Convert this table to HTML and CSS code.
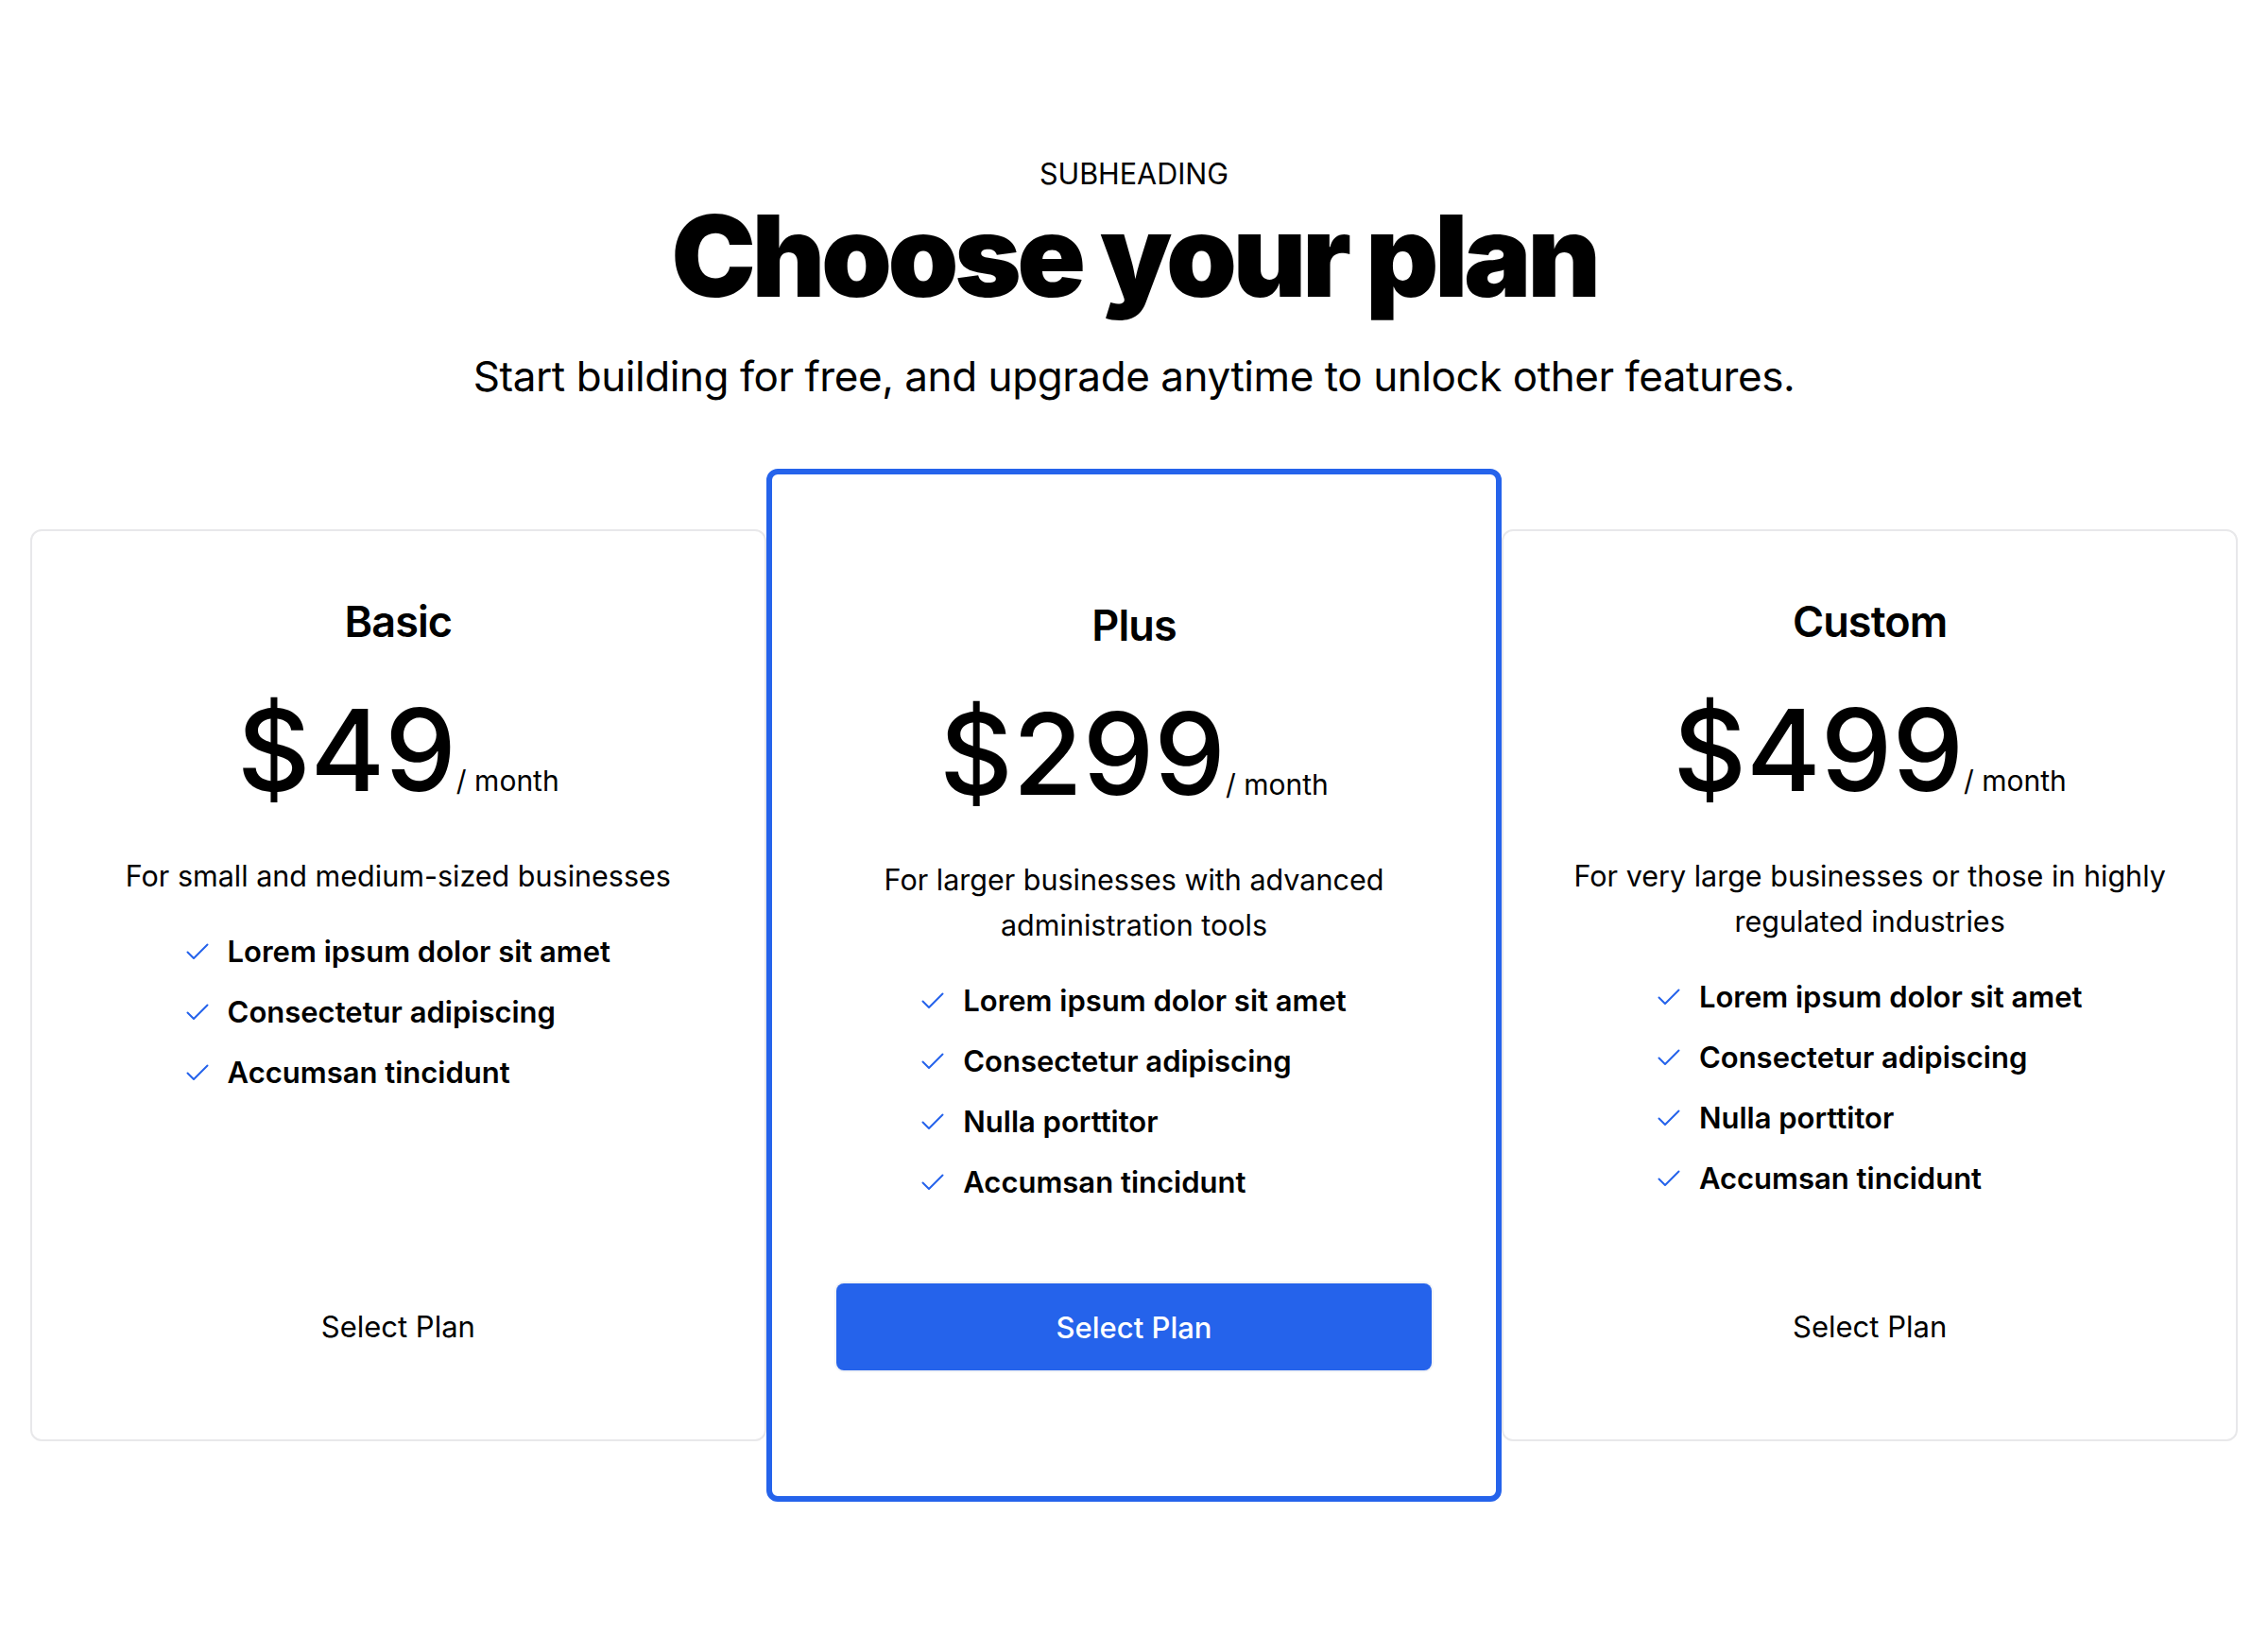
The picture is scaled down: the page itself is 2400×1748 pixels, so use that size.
FILE: index.html
```html
<!DOCTYPE html>
<html lang="en">
<head>
<meta charset="utf-8">
<title>Choose your plan</title>
<link rel="stylesheet" href="styles.css">
</head>
<body>
<section class="pricing">
  <header class="intro">
    <p class="eyebrow">SUBHEADING</p>
    <h1 class="title">Choose your plan</h1>
    <p class="lead">Start building for free, and upgrade anytime to unlock other features.</p>
  </header>
  <div class="plans">
    <article class="card">
      <h2 class="plan-name">Basic</h2>
      <div class="price"><span class="amount">$49</span><span class="per">/ month</span></div>
      <p class="desc">For small and medium-sized businesses</p>
      <ul class="features">
        <li><svg class="check" viewBox="0 0 24 18" fill="none" stroke="currentColor" stroke-width="2"><path stroke-linecap="round" stroke-linejoin="round" d="M1.5 9.5L8 16L22.5 1.5"/></svg>Lorem ipsum dolor sit amet</li>
        <li><svg class="check" viewBox="0 0 24 18" fill="none" stroke="currentColor" stroke-width="2"><path stroke-linecap="round" stroke-linejoin="round" d="M1.5 9.5L8 16L22.5 1.5"/></svg>Consectetur adipiscing</li>
        <li><svg class="check" viewBox="0 0 24 18" fill="none" stroke="currentColor" stroke-width="2"><path stroke-linecap="round" stroke-linejoin="round" d="M1.5 9.5L8 16L22.5 1.5"/></svg>Accumsan tincidunt</li>
      </ul>
      <button class="btn">Select Plan</button>
    </article>
    <article class="card featured">
      <h2 class="plan-name">Plus</h2>
      <div class="price"><span class="amount">$299</span><span class="per">/ month</span></div>
      <p class="desc">For larger businesses with advanced administration tools</p>
      <ul class="features">
        <li><svg class="check" viewBox="0 0 24 18" fill="none" stroke="currentColor" stroke-width="2"><path stroke-linecap="round" stroke-linejoin="round" d="M1.5 9.5L8 16L22.5 1.5"/></svg>Lorem ipsum dolor sit amet</li>
        <li><svg class="check" viewBox="0 0 24 18" fill="none" stroke="currentColor" stroke-width="2"><path stroke-linecap="round" stroke-linejoin="round" d="M1.5 9.5L8 16L22.5 1.5"/></svg>Consectetur adipiscing</li>
        <li><svg class="check" viewBox="0 0 24 18" fill="none" stroke="currentColor" stroke-width="2"><path stroke-linecap="round" stroke-linejoin="round" d="M1.5 9.5L8 16L22.5 1.5"/></svg>Nulla porttitor</li>
        <li><svg class="check" viewBox="0 0 24 18" fill="none" stroke="currentColor" stroke-width="2"><path stroke-linecap="round" stroke-linejoin="round" d="M1.5 9.5L8 16L22.5 1.5"/></svg>Accumsan tincidunt</li>
      </ul>
      <button class="btn btn-primary">Select Plan</button>
    </article>
    <article class="card">
      <h2 class="plan-name">Custom</h2>
      <div class="price"><span class="amount">$499</span><span class="per">/ month</span></div>
      <p class="desc">For very large businesses or those in highly regulated industries</p>
      <ul class="features">
        <li><svg class="check" viewBox="0 0 24 18" fill="none" stroke="currentColor" stroke-width="2"><path stroke-linecap="round" stroke-linejoin="round" d="M1.5 9.5L8 16L22.5 1.5"/></svg>Lorem ipsum dolor sit amet</li>
        <li><svg class="check" viewBox="0 0 24 18" fill="none" stroke="currentColor" stroke-width="2"><path stroke-linecap="round" stroke-linejoin="round" d="M1.5 9.5L8 16L22.5 1.5"/></svg>Consectetur adipiscing</li>
        <li><svg class="check" viewBox="0 0 24 18" fill="none" stroke="currentColor" stroke-width="2"><path stroke-linecap="round" stroke-linejoin="round" d="M1.5 9.5L8 16L22.5 1.5"/></svg>Nulla porttitor</li>
        <li><svg class="check" viewBox="0 0 24 18" fill="none" stroke="currentColor" stroke-width="2"><path stroke-linecap="round" stroke-linejoin="round" d="M1.5 9.5L8 16L22.5 1.5"/></svg>Accumsan tincidunt</li>
      </ul>
      <button class="btn">Select Plan</button>
    </article>
  </div>
</section>
</body>
</html>
```

FILE: styles.css
```css
* { box-sizing: border-box; }

html, body {
  margin: 0;
  background: #ffffff;
  color: #000000;
  font-family: Inter, "Noto Sans", "Liberation Sans", sans-serif;
}

.pricing {
  padding: 163px 32px 160px;
}

.intro {
  text-align: center;
}

.eyebrow {
  margin: 0;
  font-size: 30.5px;
  line-height: 42px;
  font-weight: 400;
}

.title {
  margin: 6px 0 0;
  font-size: 120px;
  line-height: 1;
  font-weight: 900;
  letter-spacing: -0.037em;
}

.lead {
  margin: 37px 0 0;
  font-size: 44px;
  line-height: 60px;
  font-weight: 400;
  letter-spacing: -0.01em;
}

.plans {
  margin-top: 132px;
  display: grid;
  grid-template-columns: repeat(3, 1fr);
  align-items: stretch;
}

.card {
  display: flex;
  flex-direction: column;
  align-items: center;
  text-align: center;
  background: #ffffff;
  border: 2px solid #e8e8ea;
  border-radius: 12px;
  padding: 73px 68px 74px;
}

.card.featured {
  position: relative;
  z-index: 1;
  margin: -64px 0;
  border: 6px solid #2563eb;
  padding: 137px 68px 133px;
}

.plan-name {
  margin: 0;
  font-size: 45px;
  line-height: 1;
  font-weight: 600;
  letter-spacing: -0.02em;
}

.price {
  margin-top: 54px;
  display: flex;
  align-items: baseline;
  justify-content: center;
}

.amount {
  font-size: 120px;
  line-height: 1;
  font-weight: 500;
}

.per {
  font-size: 30px;
  font-weight: 400;
}

.desc {
  margin: 49px 0 0;
  font-size: 30.5px;
  line-height: 48px;
  font-weight: 400;
}

.features {
  list-style: none;
  margin: 32px 0 86px;
  padding: 0;
  display: flex;
  flex-direction: column;
  gap: 16px;
  text-align: left;
}

.featured .features {
  margin-bottom: 80px;
}

.features li {
  display: flex;
  align-items: center;
  gap: 20px;
  font-size: 31px;
  line-height: 48px;
  font-weight: 600;
}

.check {
  width: 24px;
  height: 18px;
  flex: none;
  color: #2563eb;
}

.btn {
  margin-top: auto;
  width: 100%;
  height: 92px;
  border: 0;
  border-radius: 8px;
  background: transparent;
  color: #000000;
  font-family: inherit;
  font-size: 31px;
  font-weight: 400;
}

.btn-primary {
  background: #2563eb;
  color: #ffffff;
  font-weight: 500;
  box-shadow: 0 0 0 2px #f1f3f7;
}
```
